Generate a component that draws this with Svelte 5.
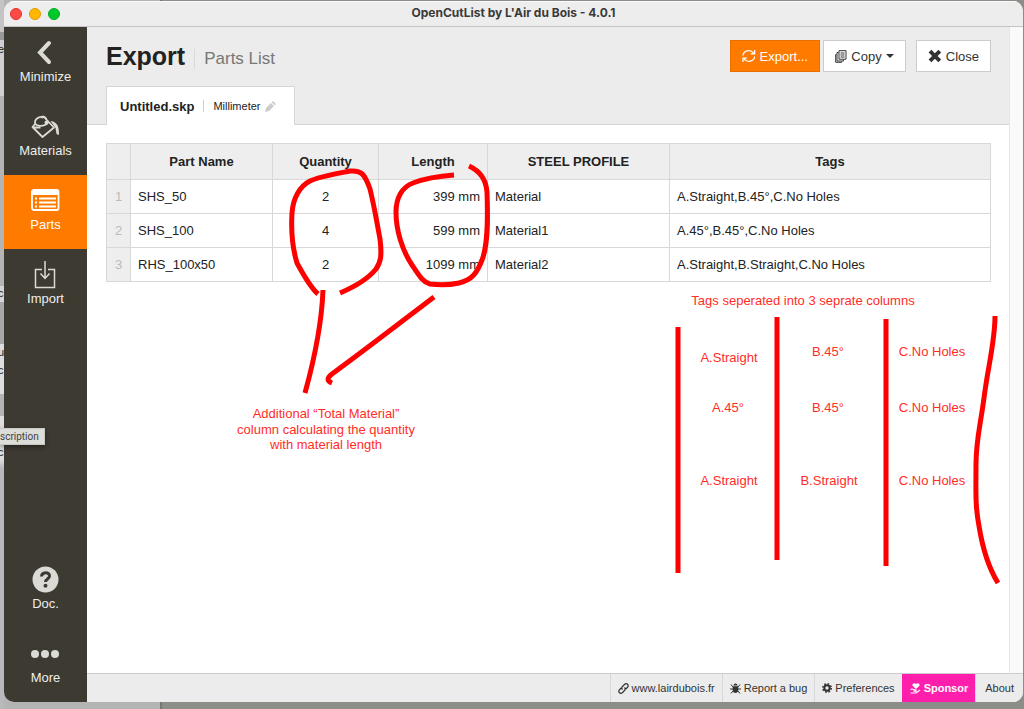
<script lang="ts">
	type Part = { name: string; qty: number; length: string; material: string; tags: string };

	const topItems = [
		{ id: 'minimize', label: 'Minimize' },
		{ id: 'materials', label: 'Materials' },
		{ id: 'parts', label: 'Parts' },
		{ id: 'import', label: 'Import' }
	];
	const bottomItems = [
		{ id: 'doc', label: 'Doc.' },
		{ id: 'more', label: 'More' }
	];

	let active = $state('parts');

	const columns = ['Part Name', 'Quantity', 'Length', 'STEEL PROFILE', 'Tags'];
	const parts: Part[] = [
		{ name: 'SHS_50', qty: 2, length: '399 mm', material: 'Material', tags: 'A.Straight,B.45°,C.No Holes' },
		{ name: 'SHS_100', qty: 4, length: '599 mm', material: 'Material1', tags: 'A.45°,B.45°,C.No Holes' },
		{ name: 'RHS_100x50', qty: 2, length: '1099 mm', material: 'Material2', tags: 'A.Straight,B.Straight,C.No Holes' }
	];

	// hand-drawn marks, in window coordinates
	const strokes = [
		'M318 294C310 287 303 274 297 263C293 250 291 230 292 213C293 198 300 186 310 181C318 177 335 174 350 171C362 170 365 175 370 189C374 205 377 223 380 239C382 255 381 262 376 269C368 279 354 287 340 293',
		'M454 175C440 176 426 178 413 183C402 187 396 198 396 212C396 230 402 250 412 265C420 277 423 282 430 284C438 285 450 285 459 283C472 280 477 273 482 260C488 245 488 220 487 192C486 179 480 171 469 166',
		'M323 290C322 317 316 353 305 393',
		'M434 297C405 319 365 350 332 374Q324 380 332 383',
		'M678 327V573',
		'M777 317V560',
		'M886 319V566',
		'M995 316C995 342 988 366 984 398C980 428 976 440 976 465C976 490 975 505 979 526C983 551 990 570 998 583'
	];

	const notes = [
		{ x: 326, y: 418, text: 'Additional “Total Material”' },
		{ x: 326, y: 434, text: 'column calculating the quantity' },
		{ x: 326, y: 449, text: 'with material length' },
		{ x: 803, y: 305, text: 'Tags seperated into 3 seprate columns' },
		{ x: 729, y: 362, text: 'A.Straight' },
		{ x: 828, y: 356, text: 'B.45°' },
		{ x: 932, y: 356, text: 'C.No Holes' },
		{ x: 728, y: 412, text: 'A.45°' },
		{ x: 828, y: 412, text: 'B.45°' },
		{ x: 932, y: 412, text: 'C.No Holes' },
		{ x: 729, y: 485, text: 'A.Straight' },
		{ x: 829, y: 485, text: 'B.Straight' },
		{ x: 932, y: 485, text: 'C.No Holes' }
	];
</script>

{#snippet navItem(item: { id: string; label: string })}
	<button type="button" class="nav-item" class:active={active === item.id} onclick={() => (active = item.id)}>
		<svg class="nav-icon" width="31" height="32" viewBox="1 0 31 32" aria-hidden="true">
			{#if item.id === 'minimize'}
				<path d="M20 7l-9 9.500 9 9.500" fill="none" stroke="currentColor" stroke-width="4" stroke-linecap="round" />
			{:else if item.id === 'materials'}
				<path d="M6.500 13.500L3.500 17l10 10L25 17.500 14.500 6.500l-2 1.500M3.500 17.500h8" fill="none" stroke="currentColor" stroke-width="1.800" stroke-linejoin="round" />
				<path d="M19 12.500c-3 4.500-13 4.500-13 0 0-5 9-8 11.500-3.500" fill="none" stroke="currentColor" stroke-width="1.800" />
				<circle cx="17.500" cy="12.500" r="2" fill="currentColor" />
				<path d="M21.500 11c5 .5 9 3.500 8.500 14l-2.500-1-1-6z" fill="currentColor" />
			{:else if item.id === 'parts'}
				<rect x="3" y="6" width="26.500" height="20" rx="2" fill="none" stroke="currentColor" stroke-width="1.800" />
				<path d="M2.500 6.500h27.500v4.500h-27.500z" fill="currentColor" />
				<path d="M10 14.500h17M10 18.500h17M10 22.500h17M6 14.500h2M6 18.500h2M6 22.500h2" stroke="currentColor" stroke-width="2" />
			{:else if item.id === 'import'}
				<path d="M13 11.500H6.500v18h19v-18H19M16 3v17M11.500 15.500l4.500 5 4.500-5" fill="none" stroke="currentColor" stroke-width="1.500" />
			{:else if item.id === 'doc'}
				<circle cx="16.500" cy="16.500" r="13" fill="currentColor" />
				<path d="M12.500 13.500c.2-5 8-5 8-.5 0 3-4 3-4 6" fill="none" stroke="#3d3a32" stroke-width="3" />
				<circle cx="16.500" cy="22.800" r="2" fill="#3d3a32" />
			{:else}
				<circle cx="6" cy="17" r="4" fill="currentColor" />
				<circle cx="16" cy="17" r="4" fill="currentColor" />
				<circle cx="26" cy="17" r="4" fill="currentColor" />
			{/if}
		</svg>
		<span>{item.label}</span>
	</button>
{/snippet}

<div class="desktop">
	<div class="behind" aria-hidden="true">
		<span class="peek title-peek">e</span>
		<span class="peek c1">c</span>
		<span class="peek c2">u</span>
		<span class="peek c3">c</span>
		<span class="peek c4">c</span>
	</div>

	<div class="window">
		<header class="titlebar">
			<div class="lights">
				<span class="light red"></span>
				<span class="light yellow"></span>
				<span class="light green"></span>
			</div>
			<div class="window-title">OpenCutList by L'Air du Bois - 4.0.1</div>
		</header>

		<div class="body">
			<nav class="sidebar">
				<div>
					{#each topItems as item (item.id)}
						{@render navItem(item)}
					{/each}
				</div>
				<div>
					{#each bottomItems as item (item.id)}
						{@render navItem(item)}
					{/each}
				</div>
			</nav>

			<div class="main">
				<div class="scroller">
					<main class="page">
						<div class="page-head">
							<div class="head-row">
								<h1>Export</h1>
								<h2>Parts List</h2>
								<div class="actions">
									<button type="button" class="btn primary">
										<svg width="14" height="14" viewBox="0 0 14 14" fill="none" stroke="currentColor" stroke-width="1.300" aria-hidden="true">
											<path d="M1 6.500C1.500 1.500 8.500-.5 12 4M13 .8V4.700H9M13 7.500c-.5 5-7.500 7-11 2.500M1 13.200V9.300h4" />
										</svg>
										Export...
									</button>
									<button type="button" class="btn copy">
										<svg width="12" height="13" viewBox="0 0 12 13" fill="none" stroke="currentColor" aria-hidden="true">
											<path d="M4 .7h7v8.500H4zM3.500 2.500h-1.500v8.500h6.500V9.500M1.500 4.500h-.8v7.800h6V11.500M5.500 3h4M5.500 5h4M5.500 7h4" />
										</svg>
										Copy
										<svg class="caret" width="8" height="4" viewBox="0 0 8 4" aria-hidden="true"><path d="M0 0h8L4 4z" fill="currentColor" /></svg>
									</button>
									<button type="button" class="btn close">
										<svg width="14" height="14" viewBox="0 0 14 14" aria-hidden="true">
											<path d="M2 2l10 10M12 2L2 12" stroke="currentColor" stroke-width="4" />
										</svg>
										Close
									</button>
								</div>
							</div>
							<div class="tab">
								<strong>Untitled.skp</strong>
								<button type="button" class="unit">
									Millimeter
									<svg width="11" height="11" viewBox="0 0 11 11" aria-hidden="true">
										<path d="M0 11l1-4 5-5 3 3-5 5zM6.700 1.300L8 0l3 3-1.300 1.300z" fill="#ccc" />
									</svg>
								</button>
							</div>
						</div>

						<div class="content">
							<table>
								<colgroup>
									<col class="w-num" />
									<col class="w-name" />
									<col class="w-qty" />
									<col class="w-len" />
									<col class="w-mat" />
									<col />
								</colgroup>
								<thead>
									<tr>
										<th class="num"></th>
										{#each columns as column (column)}
											<th>{column}</th>
										{/each}
									</tr>
								</thead>
								<tbody>
									{#each parts as part, i (part.name)}
										<tr>
											<td class="num">{i + 1}</td>
											<td>{part.name}</td>
											<td class="center">{part.qty}</td>
											<td class="right">{part.length}</td>
											<td>{part.material}</td>
											<td>{part.tags}</td>
										</tr>
									{/each}
								</tbody>
							</table>
						</div>
					</main>
					<div class="gutter"></div>
				</div>

				<footer class="footer">
					<a href="#site">
						<svg width="11" height="11" viewBox="0 0 11 11" fill="none" stroke="currentColor" stroke-width="1.200" aria-hidden="true">
							<path d="M4.500 6.500c-1-1-1-2 0-3L6.700 1.300c2-1.800 4.500.8 3 2.700L7.800 6M6.500 4.500c1 1 1 2 0 3L4.300 9.700c-2 1.800-4.500-.8-3-2.700L3.200 5" />
						</svg>
						www.lairdubois.fr
					</a>
					<a href="#bug">
						<svg width="11" height="11" viewBox="0 0 11 11" aria-hidden="true">
							<path d="M3.500 2.500a2 2 0 0 1 4 0zM2.700 3.200h5.600V7c0 4-5.600 4-5.600 0z" fill="currentColor" />
							<path d="M1 1.500l2 2.500M10 1.500L8 4M0 6h11M1 10.500L3 8M10 10.500L8 8" stroke="currentColor" />
						</svg>
						Report a bug
					</a>
					<a href="#preferences">
						<svg width="10" height="10" viewBox="0 0 10 10" fill="none" stroke="currentColor" aria-hidden="true">
							<circle cx="5" cy="5" r="2.700" stroke-width="2" />
							<circle cx="5" cy="5" r="4.200" stroke-width="1.600" stroke-dasharray="1.700 1.600" />
						</svg>
						Preferences
					</a>
					<a href="#sponsor" class="sponsor">
						<svg width="11" height="11" viewBox="0 0 11 11" aria-hidden="true">
							<path d="M6 6L2.800 3C1.500 1 4-1 6 1c2-2 4.500 0 3.200 2z" fill="currentColor" />
							<path d="M.5 6.500C3 5.500 3.500 7 6 7v1.200H3.500M.5 10h5.500l4-3" fill="none" stroke="currentColor" stroke-width="1.200" />
						</svg>
						Sponsor
					</a>
					<a href="#about">About</a>
				</footer>
			</div>
		</div>
	</div>

	<svg class="markup" width="1024" height="600" viewBox="0 0 1024 600">
		<g fill="none" stroke="#ff0000" stroke-width="5" stroke-linejoin="round">
			{#each strokes as d (d)}
				<path {d} />
			{/each}
		</g>
		{#each notes as note, i (i)}
			<text x={note.x} y={note.y}>{note.text}</text>
		{/each}
	</svg>

	<div class="tooltip">scription</div>
</div>

<style>
	:global(body) {
		margin: 0;
	}
	.desktop {
		position: relative;
		display: flex;
		box-sizing: border-box;
		min-height: 100vh;
		padding: 1px 1px 7px 4px;
		overflow: hidden;
		background: linear-gradient(90deg, #b4b4b4 160px, #777 160px, #777 162px, #8c8c88 162px);
		font-family: 'Liberation Sans', Arial, sans-serif;
		font-size: 13px;
		color: #222;
	}
	.behind {
		position: absolute;
		left: 0;
		top: 0;
		width: 4px;
		height: 100%;
		overflow: hidden;
		background: linear-gradient(#c4c4c4 32px, #999 32px, #999 40px, #d0d0d0 40px, #d0d0d0 96px, #b4b4b4 96px, #b4b4b4 286px, #d5d5d5 286px, #d5d5d5 302px, #a8a8a8 302px, #a8a8a8 344px, #ddd 344px, #ddd 394px, #b4b4b4 394px, #b4b4b4 416px, #ddd 416px, #ddd 460px, #b9b9bb 468px);
	}
	.peek {
		position: absolute;
		left: -2px;
		font-size: 11px;
		line-height: 12px;
	}
	.title-peek {
		top: 43px;
	}
	.c1 {
		top: 287px;
	}
	.c2 {
		top: 346px;
	}
	.c3 {
		top: 364px;
	}
	.c4 {
		top: 446px;
	}
	.window {
		position: relative;
		flex: 1;
		display: flex;
		flex-direction: column;
		min-width: 0;
		border-radius: 10px;
		overflow: hidden;
		background: #ececec;
	}
	.titlebar {
		display: grid;
		grid-template-columns: 1fr auto 1fr;
		align-items: center;
		box-sizing: border-box;
		height: 26px;
		border-top: 1px solid #fafafa;
		border-bottom: 1px solid #c4c4c4;
		background: #ededed;
	}
	.lights {
		display: flex;
		gap: 7px;
		padding-left: 6px;
	}
	.light {
		box-sizing: border-box;
		width: 12px;
		height: 12px;
		border-radius: 50%;
	}
	.red {
		background: #ff4b44;
		border: 1px solid #e02f2b;
	}
	.yellow {
		background: #ffb700;
		border: 1px solid #e09b00;
	}
	.green {
		background: #00ca29;
		border: 1px solid #00ab20;
	}
	.window-title {
		font-family: Inter, sans-serif;
		font-size: 12px;
		font-weight: 700;
		line-height: 16px;
		padding-bottom: 2px;
		color: #3a3a3a;
	}
	.body {
		flex: 1;
		display: flex;
	}
	.sidebar {
		flex: none;
		width: 83px;
		display: flex;
		flex-direction: column;
		justify-content: space-between;
		background: #3d3a32;
	}
	.nav-item {
		display: flex;
		flex-direction: column;
		align-items: center;
		gap: 1px;
		width: 100%;
		height: 74px;
		padding: 9px 0 0;
		border: 0;
		background: none;
		color: #dcdad5;
		font: inherit;
		line-height: 16px;
		cursor: pointer;
	}
	.nav-item span {
		color: #eeeeec;
	}
	.nav-item.active,
	.nav-item.active span {
		background: #ff7b00;
		color: #fff;
	}
	.main {
		flex: 1;
		display: flex;
		flex-direction: column;
		min-width: 0;
	}
	.scroller {
		flex: 1;
		display: flex;
		background: #fff;
	}
	.page {
		flex: 1;
		min-width: 0;
	}
	.gutter {
		flex: none;
		width: 13px;
		border-left: 1px solid #e6e6e6;
		background: #fafafa;
	}
	.page-head {
		display: flex;
		flex-direction: column;
		align-items: flex-start;
		padding: 13px 18px 0 19px;
		border-bottom: 1px solid #d6d6d6;
		background: #ececec;
	}
	.head-row {
		display: flex;
		align-items: center;
		align-self: stretch;
		height: 32px;
		margin-bottom: 14px;
	}
	h1 {
		margin: 0;
		font-size: 25px;
		line-height: 32px;
	}
	h2 {
		margin: 6px 0 0 9px;
		padding-left: 9px;
		border-left: 1px solid #d8d8d8;
		font-size: 17px;
		font-weight: 400;
		line-height: 20px;
		color: #777;
	}
	.actions {
		display: flex;
		gap: 3px;
		margin-left: auto;
	}
	.btn {
		display: flex;
		align-items: center;
		justify-content: center;
		gap: 4px;
		box-sizing: border-box;
		height: 32px;
		padding: 0 11px;
		border: 1px solid #ccc;
		background: #fff;
		color: #333;
		font: inherit;
		cursor: pointer;
	}
	.primary {
		width: 90px;
		border-color: #e66f00;
		background: #ff7b00;
		color: #fff;
	}
	.copy {
		width: 83px;
	}
	.close {
		width: 75px;
		margin-left: 7px;
	}
	.tab {
		display: flex;
		align-items: center;
		box-sizing: border-box;
		height: 39px;
		margin-bottom: -1px;
		padding: 0 18px 0 13px;
		border: 1px solid #d6d6d6;
		border-bottom: 0;
		background: #fff;
	}
	.unit {
		display: flex;
		align-items: center;
		gap: 5px;
		margin-left: 9px;
		padding: 0 0 0 9px;
		border: 0;
		border-left: 1px solid #ccc;
		background: none;
		color: #222;
		font: inherit;
		font-size: 11px;
		line-height: 12px;
		cursor: pointer;
	}
	.content {
		padding: 18px 18px 18px 19px;
	}
	table {
		width: 100%;
		table-layout: fixed;
		border-collapse: collapse;
	}
	.w-num {
		width: 24px;
	}
	.w-name {
		width: 142px;
	}
	.w-qty {
		width: 106px;
	}
	.w-len {
		width: 109px;
	}
	.w-mat {
		width: 182px;
	}
	th,
	td {
		box-sizing: border-box;
		padding: 0 7px;
		border: 1px solid #d8d8d8;
		text-align: left;
		line-height: 16px;
	}
	th {
		height: 36px;
		background: #eee;
		text-align: center;
	}
	td {
		height: 34px;
	}
	.num {
		padding: 0;
		background: #eee;
		color: #bbb;
		text-align: center;
	}
	.center {
		text-align: center;
	}
	.right {
		text-align: right;
	}
	.footer {
		display: flex;
		justify-content: flex-end;
		height: 28px;
		border-top: 1px solid #ccc;
		background: #ececec;
	}
	.footer a {
		display: flex;
		align-items: center;
		gap: 3px;
		padding: 0 7px;
		border-left: 1px solid #d8d8d8;
		color: #333;
		font-size: 11px;
		text-decoration: none;
		white-space: nowrap;
	}
	.footer a:last-child {
		padding: 0 9px;
	}
	.footer .sponsor {
		border-color: #ff1fad;
		background: #ff1fad;
		color: #fff;
		font-weight: 700;
	}
	.markup {
		position: absolute;
		left: 0;
		top: 0;
		pointer-events: none;
	}
	.markup text {
		font-size: 13px;
		text-anchor: middle;
		fill: #ff2d26;
	}
	.tooltip {
		position: absolute;
		left: 0;
		top: 428px;
		box-sizing: border-box;
		width: 45px;
		height: 17px;
		border: 1px solid #c8c8c4;
		border-left: 0;
		background: #dcdcd8;
		box-shadow: 0 2px 5px rgba(0, 0, 0, 0.4);
		font-family: Roboto, sans-serif;
		font-size: 10px;
		line-height: 15px;
		color: #444;
	}
</style>
